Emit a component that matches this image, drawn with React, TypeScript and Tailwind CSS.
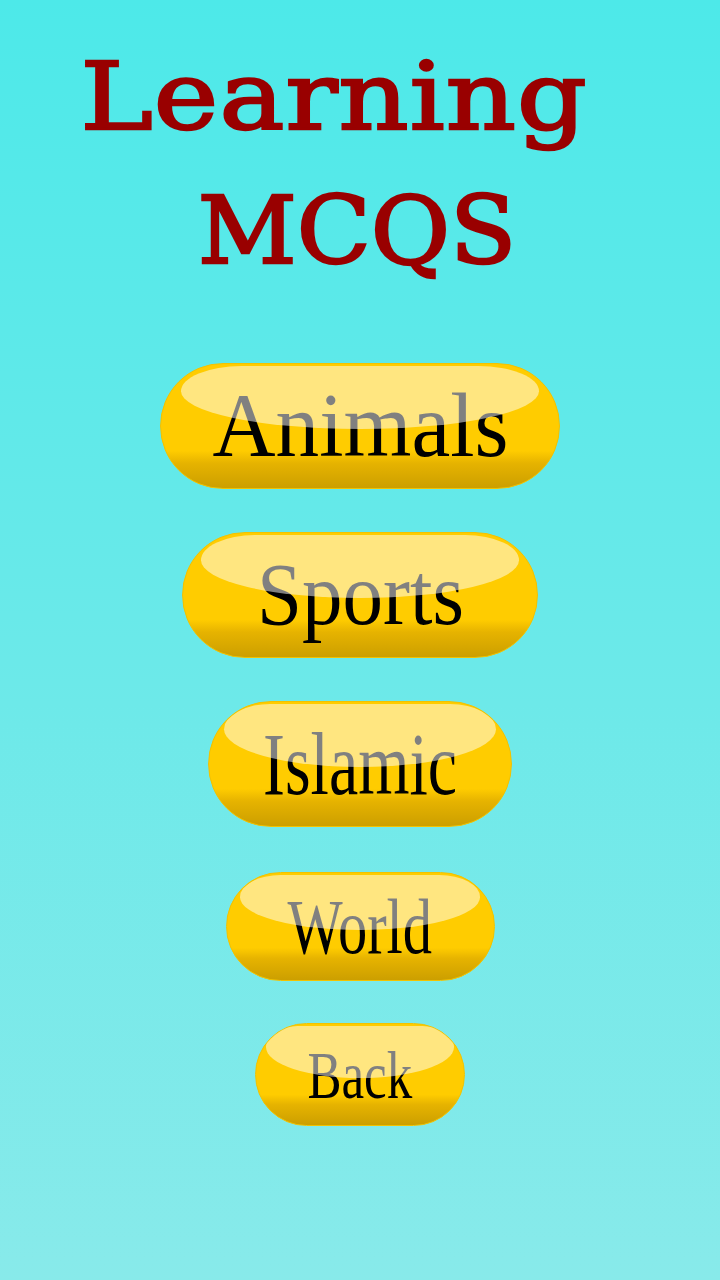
const buttons = [
  { label: 'Animals', w: 'w-[400px]', h: 'h-[126px]', text: 'text-[90px]', sx: 'scale-x-[0.97]', mt: 'mt-[65px]' },
  { label: 'Sports', w: 'w-[356px]', h: 'h-[126px]', text: 'text-[88px]', sx: 'scale-x-[0.92]', mt: 'mt-[43px]' },
  { label: 'Islamic', w: 'w-[304px]', h: 'h-[126px]', text: 'text-[89px]', sx: 'scale-x-[0.74]', mt: 'mt-[43px]' },
  { label: 'World', w: 'w-[269px]', h: 'h-[109px]', text: 'text-[79px]', sx: 'scale-x-[0.74]', mt: 'mt-[45px]' },
  { label: 'Back', w: 'w-[210px]', h: 'h-[103px]', text: 'text-[68px]', sx: 'scale-x-[0.75]', mt: 'mt-[42px]' },
];

function GlossyButton({ label, w, h, text, sx, mt }: (typeof buttons)[number]) {
  return (
    <button
      className={`relative ${w} ${h} ${mt} flex items-center justify-center overflow-hidden rounded-full border border-[#f2c200] bg-[linear-gradient(to_bottom,#ffcc00_0%,#ffcc00_70%,#e6b300_80%,#cc9f00_100%)]`}
    >
      <span
        className={`inline-block ${text} ${sx} leading-none text-black whitespace-nowrap`}
        style={{ fontFamily: '"Liberation Serif", "Times New Roman", serif' }}
      >
        {label}
      </span>
      {/* glossy highlight sits over the label */}
      <span className="absolute left-[5%] right-[5%] top-[2px] h-[51%] rounded-[17%_17%_50%_50%/40%_40%_60%_60%] bg-white/50" />
    </button>
  );
}

export default function App() {
  return (
    <div className="min-h-screen w-full bg-[linear-gradient(to_bottom,#4de9e9_0%,#6de9e9_55%,#88eaea_100%)]">
      <div className="flex flex-col items-center pt-[30px]">
        <h1
          className="flex flex-col items-center text-[93px] leading-[134px] font-normal text-[#990000] [-webkit-text-stroke:2.5px_#990000]"
          style={{ fontFamily: '"DejaVu Serif", "Liberation Serif", serif' }}
        >
          <span className="inline-block pr-[44px] scale-x-[1.17] tracking-[1px]">Learning</span>
          <span className="inline-block pr-[6px] scale-x-[1.04]">MCQS</span>
        </h1>

        {buttons.map((b) => (
          <GlossyButton key={b.label} {...b} />
        ))}
      </div>
    </div>
  );
}
